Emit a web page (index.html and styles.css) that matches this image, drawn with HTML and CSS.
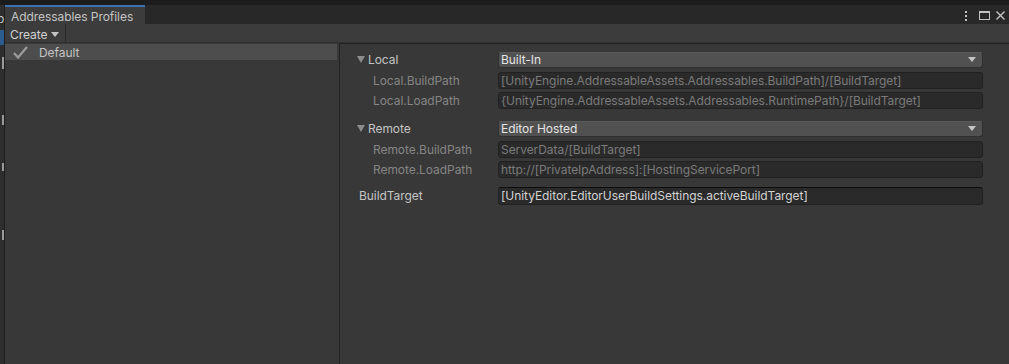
FILE: index.html
```html
<!DOCTYPE html>
<html lang="en">
<head>
  <meta charset="UTF-8">
  <title>Addressables Profiles</title>
  <link rel="stylesheet" href="styles.css">
</head>
<body>
  <div class="editor">
    <!-- sliver of the window docked behind -->
    <div class="behind">
      <span class="behind-letter">p</span>
      <div class="behind-tab"></div>
      <div class="behind-mark m1"></div>
      <div class="behind-mark m2"></div>
      <div class="behind-mark m3"></div>
      <div class="behind-mark m4"></div>
    </div>

    <div class="window">
      <div class="tabbar">
        <div class="tab">Addressables Profiles</div>
        <div class="tab-tools">
          <svg width="4" height="10" viewBox="0 0 4 10"><rect x="1" y="0" width="2" height="2" fill="#c4c4c4"/><rect x="1" y="4" width="2" height="2" fill="#c4c4c4"/><rect x="1" y="8" width="2" height="2" fill="#c4c4c4"/></svg>
          <svg width="11" height="9" viewBox="0 0 11 9"><rect x="0.5" y="0.5" width="10" height="8" fill="none" stroke="#c4c4c4"/><rect x="0" y="0" width="11" height="2" fill="#c4c4c4"/></svg>
          <svg width="9" height="9" viewBox="0 0 9 9"><path d="M0.5 0.5 L8.5 8.5 M8.5 0.5 L0.5 8.5" stroke="#c4c4c4" stroke-width="1.4"/></svg>
        </div>
      </div>

      <div class="toolbar">
        <div class="tool-btn">Create <span class="caret"></span></div>
      </div>

      <div class="panes">
        <div class="profiles">
          <div class="profile selected">
            <svg class="check" width="15" height="13" viewBox="0 0 15 13"><path d="M1 7 L5 11.5 L14 1" fill="none" stroke="#9c9c9c" stroke-width="2.2"/></svg>
            <span>Default</span>
          </div>
        </div>

        <div class="inspector">
          <div class="group">
            <div class="row head">
              <div class="label"><span class="fold"></span>Local</div>
              <div class="popup">Built-In<span class="caret"></span></div>
            </div>
            <div class="row">
              <div class="label sub">Local.BuildPath</div>
              <div class="field dim">[UnityEngine.AddressableAssets.Addressables.BuildPath]/[BuildTarget]</div>
            </div>
            <div class="row">
              <div class="label sub">Local.LoadPath</div>
              <div class="field dim">{UnityEngine.AddressableAssets.Addressables.RuntimePath}/[BuildTarget]</div>
            </div>
          </div>

          <div class="group">
            <div class="row head">
              <div class="label"><span class="fold"></span>Remote</div>
              <div class="popup">Editor Hosted<span class="caret"></span></div>
            </div>
            <div class="row">
              <div class="label sub">Remote.BuildPath</div>
              <div class="field dim">ServerData/[BuildTarget]</div>
            </div>
            <div class="row">
              <div class="label sub">Remote.LoadPath</div>
              <div class="field dim">http://[PrivateIpAddress]:[HostingServicePort]</div>
            </div>
          </div>

          <div class="group last">
            <div class="row">
              <div class="label plain">BuildTarget</div>
              <div class="field tall">[UnityEditor.EditorUserBuildSettings.activeBuildTarget]</div>
            </div>
          </div>
        </div>
      </div>
    </div>
  </div>
</body>
</html>
```

FILE: styles.css
```css
/* Unity dark editor skin */
:root {
  --backdrop: #1c1c1c;
  --tabbar: #282828;
  --tab: #3c3c3c;
  --tab-accent: #3a72b0;
  --toolbar: #3c3c3c;
  --panel: #383838;
  --splitter: #232323;
  --selected: #4d4d4d;
  --text: #c4c4c4;
  --text-dim: #858585;
  --field: #2a2a2a;
  --field-border: #212121;
  --popup: #515151;
  --popup-border: #303030;
}

* {
  margin: 0;
  padding: 0;
  box-sizing: border-box;
}

body {
  width: 1009px;
  height: 364px;
  overflow: hidden;
  background-color: var(--backdrop);
  font-family: 'Inter', 'Liberation Sans', sans-serif;
  font-size: 12px;
  letter-spacing: -0.06px;
  color: var(--text);
}

.editor {
  display: flex;
  height: 100%;
  padding-top: 5px;
}

/* Window behind, only 5px of it show */
.behind {
  position: relative;
  width: 5px;
  flex-shrink: 0;
  background-color: #2e2e2e;
  border-right: 1px solid #1e1e1e;
  overflow: hidden;
}

.behind-letter {
  position: absolute;
  left: -3px;
  top: 6px;
  color: #c4c4c4;
}

.behind-tab {
  position: absolute;
  left: 0;
  top: 25px;
  width: 4px;
  height: 15px;
  background-color: #2d5d8f;
}

.behind-mark {
  position: absolute;
  left: 2px;
  width: 2px;
  background-color: #9a9a9a;
}

.m1 { top: 52px; height: 12px; }
.m2 { top: 110px; height: 10px; }
.m3 { top: 158px; height: 8px; }
.m4 { top: 225px; height: 10px; }

.window {
  flex: 1;
  display: flex;
  flex-direction: column;
  min-width: 0;
}

.tabbar {
  display: flex;
  align-items: stretch;
  height: 19px;
  background-color: var(--tabbar);
}

.tab {
  width: 140px;
  padding: 2px 0 0 6px;
  background-color: var(--tab);
  border-top: 2px solid var(--tab-accent);
  line-height: 15px;
  white-space: nowrap;
}

.tab-tools {
  margin-left: auto;
  display: flex;
  align-items: center;
  gap: 6px;
  padding: 2px 4px 0 0;
}

.tab-tools svg:first-child {
  margin-right: 5px;
}

.toolbar {
  display: flex;
  height: 19px;
  background-color: var(--toolbar);
  border-bottom: 1px solid #303030;
}

.tool-btn {
  display: flex;
  align-items: center;
  gap: 4px;
  padding: 2px 6px 0 5px;
  border-right: 1px solid #2a2a2a;
  color: #d2d2d2;
}

.caret {
  display: inline-block;
  width: 0;
  height: 0;
  border-left: 4px solid transparent;
  border-right: 4px solid transparent;
  border-top: 5px solid #c4c4c4;
}

.panes {
  flex: 1;
  display: flex;
  background-color: var(--panel);
}

.profiles {
  width: 335px;
  flex-shrink: 0;
  padding-top: 1px;
  border-right: 1px solid var(--splitter);
}

.profile {
  display: flex;
  align-items: center;
  height: 16px;
  margin-right: 2px;
  padding-left: 8px;
}

.profile.selected {
  background-color: var(--selected);
}

.check {
  margin-right: 11px;
}

.inspector {
  flex: 1;
  border-top: 1px solid var(--splitter);
  padding: 5px 26px 0 17px;
}

.group {
  margin-bottom: 8px;
}

.group.last {
  margin-top: -2px;
}

.row {
  display: flex;
  align-items: center;
  height: 20px;
}

.row.head {
  height: 21px;
}

.label {
  display: flex;
  align-items: center;
  width: 141px;
  flex-shrink: 0;
  white-space: nowrap;
}

.label.sub {
  padding-left: 16px;
  color: var(--text-dim);
}

.label.plain {
  padding-left: 2px;
}

.fold {
  width: 0;
  height: 0;
  margin-right: 3px;
  border-left: 4px solid transparent;
  border-right: 4px solid transparent;
  border-top: 7px solid #8c8c8c;
}

.popup {
  flex: 1;
  display: flex;
  align-items: center;
  justify-content: space-between;
  height: 16px;
  padding: 0 6px 0 2px;
  background-color: var(--popup);
  border: 1px solid var(--popup-border);
  border-top-color: #5a5a5a;
  border-radius: 3px;
  color: #e4e4e4;
}

.field {
  flex: 1;
  height: 17px;
  margin-top: 1px;
  padding: 0 2px;
  line-height: 15px;
  background-color: var(--field);
  border: 1px solid var(--field-border);
  border-radius: 3px;
  white-space: nowrap;
  overflow: hidden;
  color: #d2d2d2;
}

.field.dim {
  color: #7a7a7a;
}

.field.tall {
  height: 18px;
  line-height: 16px;
  border-top-color: #0d0d0d;
}
```
